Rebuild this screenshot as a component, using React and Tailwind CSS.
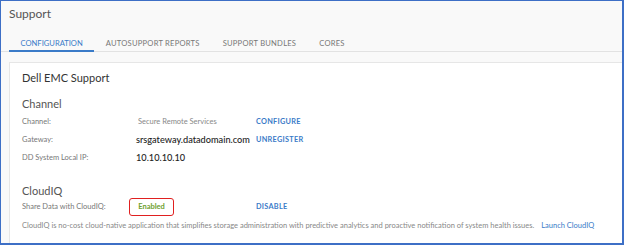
import React from "react";

const font = { fontFamily: "Lato, 'Open Sans', sans-serif" };

const tabs = ["CONFIGURATION", "AUTOSUPPORT REPORTS", "SUPPORT BUNDLES", "CORES"];

function Row({ label, value, action, big }) {
  return (
    <div className="flex items-center h-[18px]">
      <div className="w-[114px] text-[7.5px] text-[#777]">{label}</div>
      <div
        className={
          big
            ? "w-[120px] text-[9.2px] text-[#222] font-medium whitespace-nowrap"
            : "w-[120px] pl-[2px] text-[7.5px] text-[#888]"
        }
      >
        {value}
      </div>
      {action && (
        <div className="text-[7.3px] font-bold tracking-[0.04em] text-[#3a7bc8]">
          {action}
        </div>
      )}
    </div>
  );
}

export default function App() {
  return (
    <div
      className="w-[625px] h-[246px] bg-white overflow-hidden"
      style={font}
    >
      <div className="w-[624px] h-[245px] border-l border-t border-r-2 border-b-2 border-[#3d6fc6] bg-[#f9f9f9] flex flex-col">
        {/* Header */}
        <div className="pl-[8px] pt-[4px] text-[12px] text-[#555] h-[30px]">Support</div>

        {/* Tabs */}
        <div className="flex border-b border-[#e2e2e2] pl-[8px] h-[21px] items-end">
          {tabs.map((t, i) => (
            <div
              key={t}
              className={
                i === 0
                  ? "px-[11.5px] pb-[1px] text-[7.6px] text-[#3a7bc8] border-b-2 border-[#3a7bc8] -mb-px"
                  : "px-[11.5px] pb-[2px] text-[7.6px] tracking-[0.03em] text-[#777]"
              }
            >
              {t}
            </div>
          ))}
        </div>

        {/* Card */}
        <div className="mt-[10px] ml-[8px] flex-1 bg-white border-l border-t border-[#e6e6e6] pl-[12px] pt-[7px]">
          <div className="text-[11px] text-[#333] h-[18px]">Dell EMC Support</div>

          <div className="mt-[8px] text-[11px] text-[#555] h-[16px]">Channel</div>
          <div className="mt-[1px]">
            <Row label="Channel:" value="Secure Remote Services" action="CONFIGURE" />
            <Row label="Gateway:" value="srsgateway.datadomain.com" action="UNREGISTER" big />
            <Row label="DD System Local IP:" value="10.10.10.10" big />
          </div>

          <div className="mt-[16px] text-[11px] text-[#555] h-[14px]">CloudIQ</div>
          <div className="flex items-center h-[20px]">
            <div className="w-[107px] text-[7.5px] text-[#777]">Share Data with CloudIQ:</div>
            <div className="w-[45px] h-[18px] border border-[#e02020] rounded-[3px] flex items-center justify-center text-[7.5px] font-bold text-[#6f9f2e]">
              Enabled
            </div>
            <div className="ml-[82px] text-[7.3px] font-bold tracking-[0.04em] text-[#3a7bc8]">
              DISABLE
            </div>
          </div>
          <div className="mt-[3px] text-[7.5px] text-[#888] whitespace-nowrap">
            CloudIQ is no-cost cloud-native application that simplifies storage administration with
            predictive analytics and proactive notification of system health issues.
            <span className="ml-[7px] text-[#3a7bc8]">Launch CloudIQ</span>
          </div>
        </div>
      </div>
    </div>
  );
}
